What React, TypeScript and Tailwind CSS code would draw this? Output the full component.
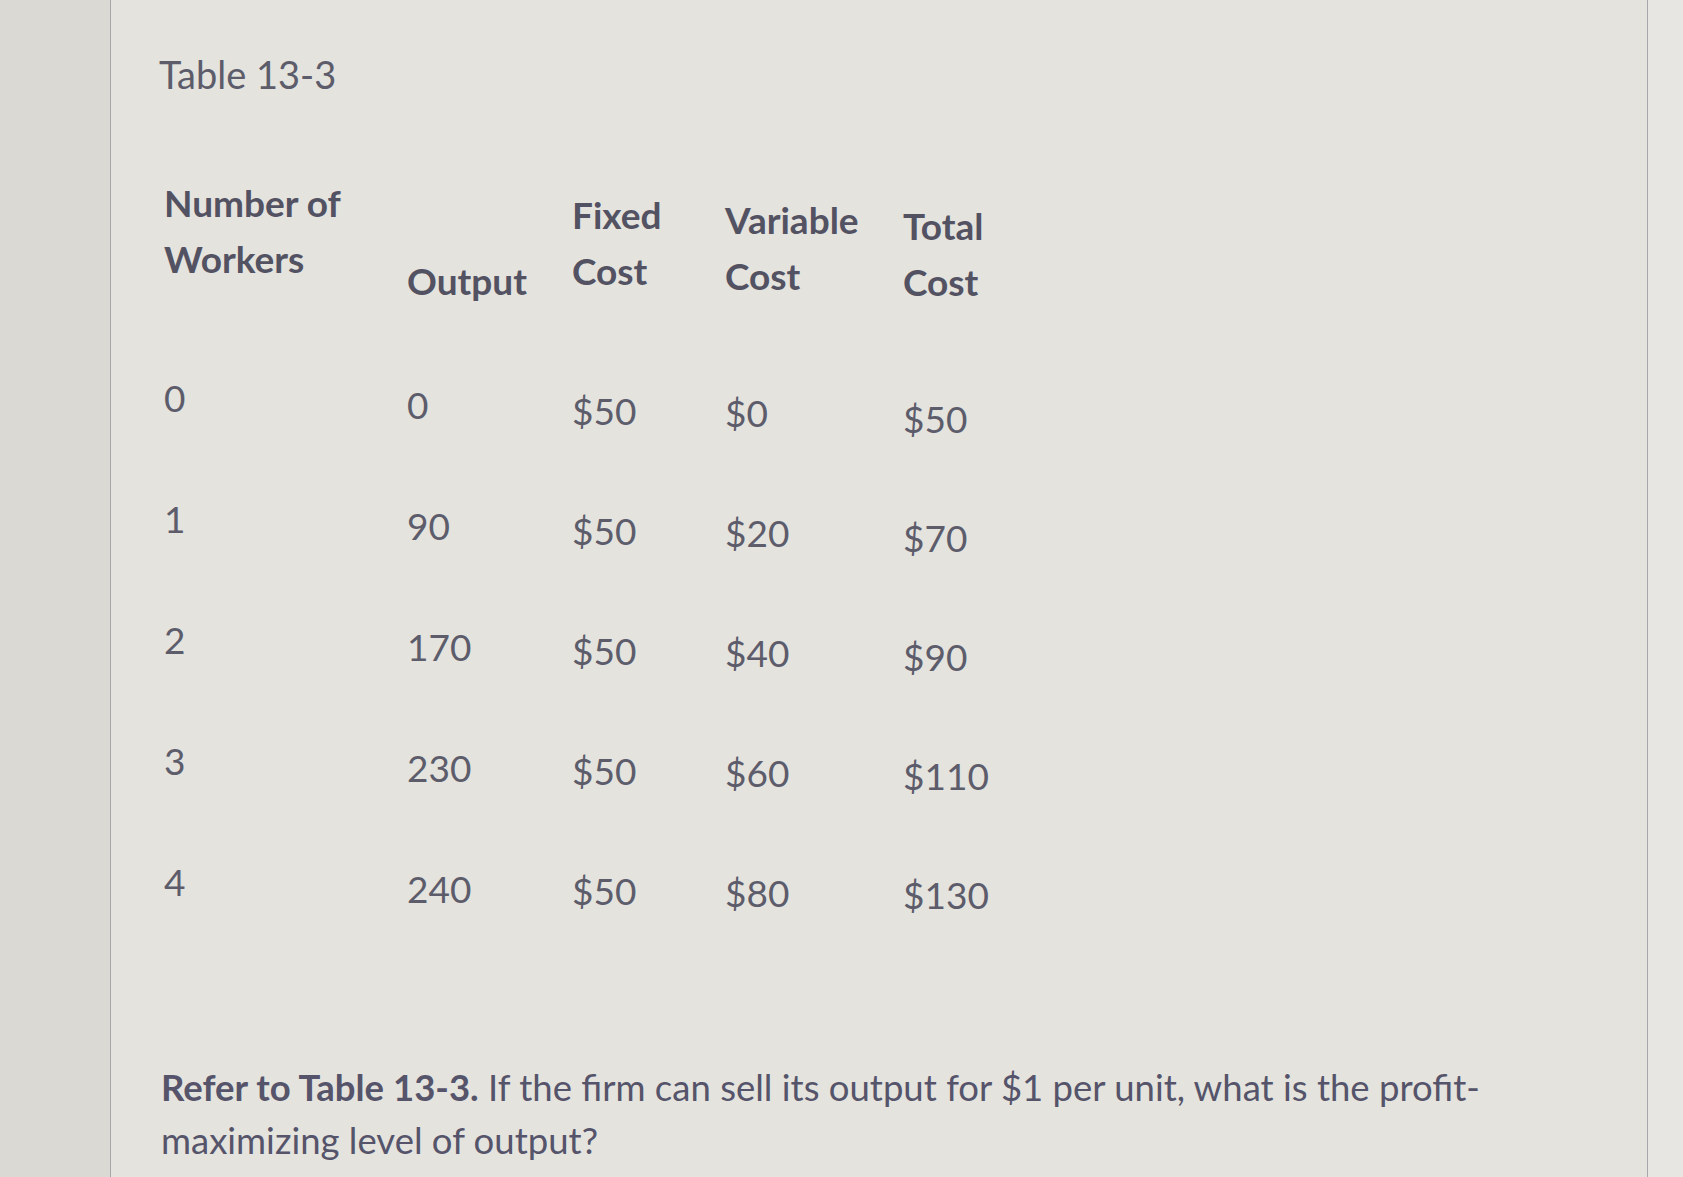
import React from 'react';

type Column = {
  key: string;
  width: string;
  offset: string;
  rowHeight: string;
  values: string[];
};

// each column drifts down a little, like the photo of the screen
const columns: Column[] = [
  { key: 'workers', width: 'w-[243px]', offset: 'pt-0', rowHeight: 'h-[121px]', values: ['0', '1', '2', '3', '4'] },
  { key: 'output', width: 'w-[165px]', offset: 'pt-[7px]', rowHeight: 'h-[121px]', values: ['0', '90', '170', '230', '240'] },
  { key: 'fixed', width: 'w-[153px]', offset: 'pt-[13px]', rowHeight: 'h-[120px]', values: ['$50', '$50', '$50', '$50', '$50'] },
  { key: 'variable', width: 'w-[178px]', offset: 'pt-[15px]', rowHeight: 'h-[120px]', values: ['$0', '$20', '$40', '$60', '$80'] },
  { key: 'total', width: 'w-[120px]', offset: 'pt-[21px]', rowHeight: 'h-[119px]', values: ['$50', '$70', '$90', '$110', '$130'] },
];

const App: React.FC = () => {
  return (
    <div className="flex h-[1177px] w-full overflow-hidden bg-[#dddbd5] font-['Lato','Open_Sans',sans-serif] text-[#5d5c6b]">
      <div className="w-[110px] shrink-0 bg-[#dbd9d3]" />

      <div className="flex-1 border-x border-[#a9a6ac] bg-[#e4e3de] pl-[53px] pt-[50px]">
        <h1 className="ml-[-5px] text-[38px] leading-[48px]">Table 13-3</h1>

        {/* header row */}
        <div className="mt-[77px] flex font-bold text-[#535262] text-[37px] leading-[56px]">
          <div className="w-[243px]">
            Number of
            <br />
            Workers
          </div>
          <div className="w-[165px] pt-[78px]">Output</div>
          <div className="w-[153px] pt-[12px]">
            Fixed
            <br />
            Cost
          </div>
          <div className="w-[178px] pt-[17px]">
            Variable
            <br />
            Cost
          </div>
          <div className="w-[120px] pt-[23px]">
            Total
            <br />
            Cost
          </div>
        </div>

        {/* data rows */}
        <div className="mt-[64px] flex text-[37px] leading-[48px]">
          {columns.map(col => (
            <div key={col.key} className={`${col.width} ${col.offset} flex flex-col`}>
              {col.values.map((v, i) => (
                <div key={i} className={col.rowHeight}>
                  {v}
                </div>
              ))}
            </div>
          ))}
        </div>

        <p className="ml-[-3px] mt-[71px] text-[36.5px] leading-[53px] text-[#55546a]">
          <strong className="font-bold">Refer to Table 13-3.</strong> If the firm can sell its output for $1 per unit, what is the profit-
          <br />
          maximizing level of output?
        </p>
      </div>

      <div className="w-[35px] shrink-0 bg-[#e7e6e2]" />
    </div>
  );
};

export default App;
